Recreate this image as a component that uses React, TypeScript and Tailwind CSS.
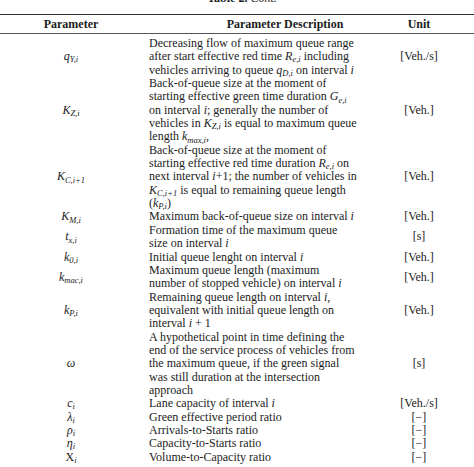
import type { ReactNode } from 'react';

const V = ({ children }: { children: ReactNode }) => <i>{children}</i>;

// variable with italic subscript
const Sym = ({ b, s, upright }: { b: string; s: string; upright?: boolean }) => (
  <span className="whitespace-nowrap">
    {upright ? b : <i>{b}</i>}
    <sub className="text-[8.5px] italic">{s}</sub>
  </span>
);

type Row = { param: ReactNode; lines: ReactNode[]; unit: string };

const rows: Row[] = [
  {
    param: <Sym b="q" s="Y,i" />,
    lines: [
      'Decreasing flow of maximum queue range',
      <>after start effective red time <Sym b="R" s="e,i" /> including</>,
      <>vehicles arriving to queue <Sym b="q" s="D,i" /> on interval <V>i</V></>,
    ],
    unit: '[Veh./s]',
  },
  {
    param: <Sym b="K" s="Z,i" />,
    lines: [
      'Back-of-queue size at the moment of',
      <>starting effective green time duration <Sym b="G" s="e,i" /></>,
      <>on interval <V>i</V>; generally the number of</>,
      <>vehicles in <Sym b="K" s="Z,i" /> is equal to maximum queue</>,
      <>length <Sym b="k" s="max,i" />,</>,
    ],
    unit: '[Veh.]',
  },
  {
    param: <Sym b="K" s="C,i+1" />,
    lines: [
      'Back-of-queue size at the moment of',
      <>starting effective red time duration <Sym b="R" s="e,i" /> on</>,
      <>next interval <V>i</V>+1; the number of vehicles in</>,
      <><Sym b="K" s="C,i+1" /> is equal to remaining queue length</>,
      <>(<Sym b="k" s="P,i" />)</>,
    ],
    unit: '[Veh.]',
  },
  {
    param: <Sym b="K" s="M,i" />,
    lines: [<>Maximum back-of-queue size on interval <V>i</V></>],
    unit: '[Veh.]',
  },
  {
    param: <Sym b="t" s="x,i" />,
    lines: ['Formation time of the maximum queue', <>size on interval <V>i</V></>],
    unit: '[s]',
  },
  {
    param: <Sym b="k" s="0,i" />,
    lines: [<>Initial queue lenght on interval <V>i</V></>],
    unit: '[Veh.]',
  },
  {
    param: <Sym b="k" s="mac,i" />,
    lines: ['Maximum queue length (maximum', <>number of stopped vehicle) on interval <V>i</V></>],
    unit: '[Veh.]',
  },
  {
    param: <Sym b="k" s="P,i" />,
    lines: [
      <>Remaining queue length on interval <V>i</V>,</>,
      'equivalent with initial queue length on',
      <>interval <V>i</V> + 1</>,
    ],
    unit: '[Veh.]',
  },
  {
    param: <V>ω</V>,
    lines: [
      'A hypothetical point in time defining the',
      'end of the service process of vehicles from',
      'the maximum queue, if the green signal',
      'was still duration at the intersection',
      'approach',
    ],
    unit: '[s]',
  },
  { param: <Sym b="c" s="i" />, lines: [<>Lane capacity of interval <V>i</V></>], unit: '[Veh./s]' },
  { param: <Sym b="λ" s="i" />, lines: ['Green effective period ratio'], unit: '[−]' },
  { param: <Sym b="ρ" s="i" />, lines: ['Arrivals-to-Starts ratio'], unit: '[−]' },
  { param: <Sym b="η" s="i" />, lines: ['Capacity-to-Starts ratio'], unit: '[−]' },
  { param: <Sym b="X" s="i" upright />, lines: ['Volume-to-Capacity ratio'], unit: '[−]' },
];

export default function App() {
  return (
    <div
      className="w-[474px] h-[467px] overflow-hidden bg-white text-[#1c1c1c] text-[12px]"
      style={{ fontFamily: '"Liberation Serif", "Times New Roman", serif' }}
    >
      {/* caption, mostly cut off by the top edge */}
      <div className="-mt-[8px] h-[13px] leading-[13px] pl-[10px] text-center">
        <b>Table 2.</b> <i>Cont.</i>
      </div>

      <div className="mt-[9px] border-t-[1.5px] border-[#2e2e2e]">
        <div className="grid grid-cols-[142px_222px_110px] h-[19px] items-center border-b border-[#555] font-bold">
          <div className="text-center">Parameter</div>
          <div className="text-center pl-[64px]">Parameter Description</div>
          <div className="text-center">Unit</div>
        </div>

        <div className="pt-[3px] leading-[13.35px]">
          {rows.map((r, i) => (
            <div key={i} className="grid grid-cols-[142px_222px_110px] items-center">
              <div className="text-center">{r.param}</div>
              <div className="pl-[7px]">
                {r.lines.map((l, j) => (
                  <div key={j} className="whitespace-nowrap">
                    {l}
                  </div>
                ))}
              </div>
              <div className="text-center">{r.unit}</div>
            </div>
          ))}
        </div>
      </div>
    </div>
  );
}
